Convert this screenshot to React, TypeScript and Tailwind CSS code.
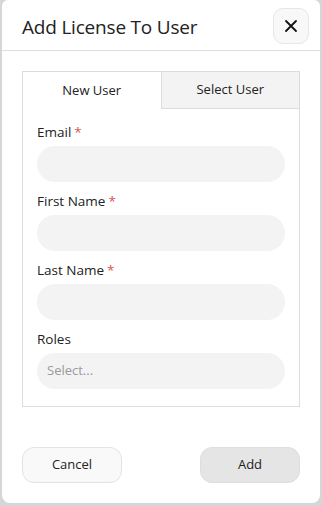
import { useState } from 'react';

type Field = { label: string; required: boolean; placeholder?: string };

const fields: Field[] = [
  { label: 'Email', required: true },
  { label: 'First Name', required: true },
  { label: 'Last Name', required: true },
  { label: 'Roles', required: false, placeholder: 'Select...' },
];

export default function App() {
  const [tab, setTab] = useState<'new' | 'select'>('new');

  return (
    <div
      className="w-[322px] h-[506px] bg-[#d6d6d6] px-[2px] pb-[3px]"
      style={{ fontFamily: '"Open Sans", "Noto Sans", sans-serif' }}
    >
      <div className="h-full bg-white rounded-b-lg rounded-t-md flex flex-col">
        {/* header */}
        <div className="h-[51px] border-b border-[#dedede] flex items-start justify-between pl-[20px] pr-[11px] pt-[8px] shrink-0">
          <h1 className="text-[19px] leading-[36px] text-[#222] tracking-[-0.2px] mt-[1px]">Add License To User</h1>
          <button className="w-[36px] h-[36px] rounded-[10px] border border-[#e6e6e6] bg-[#f8f8f8] flex items-center justify-center">
            <svg width="14" height="14" viewBox="0 0 14 14" fill="none" stroke="#111" strokeWidth="1.8" strokeLinecap="round">
              <path d="M2 2 L12 12 M12 2 L2 12" />
            </svg>
          </button>
        </div>

        {/* body */}
        <div className="px-[20px] pt-[20px]">
          <div className="border border-[#dcdcdc]">
            <div className="flex h-[37px]">
              <button
                onClick={() => setTab('new')}
                className={`flex-1 text-[13px] text-[#222] ${tab === 'new' ? 'bg-white' : 'bg-[#f3f3f3] border-b border-[#dcdcdc]'}`}
              >
                New User
              </button>
              <button
                onClick={() => setTab('select')}
                className={`flex-1 text-[13px] text-[#222] border-l border-[#dcdcdc] ${tab === 'select' ? 'bg-white' : 'bg-[#f3f3f3] border-b'}`}
              >
                Select User
              </button>
            </div>

            <div className="px-[14px] pt-[13px] pb-[8px]">
              {fields.map((f) => (
                <div key={f.label} className="mb-[9px]">
                  <div className="h-[20px] mb-[4px] text-[13.5px] leading-[20px] text-[#222]">
                    {f.label}
                    {f.required && <span className="text-[#d9534f] ml-[3px]">*</span>}
                  </div>
                  <div className="h-[36px] rounded-full bg-[#f3f3f3] flex items-center px-[10px] text-[13px] text-[#9a9a9a]">
                    {f.placeholder}
                  </div>
                </div>
              ))}
            </div>
          </div>
        </div>

        {/* footer */}
        <div className="flex justify-between px-[20px] mt-[40px]">
          <button className="w-[100px] h-[36px] rounded-[12px] border border-[#e3e3e3] bg-[#f9f9f9] text-[13px] text-[#222]">
            Cancel
          </button>
          <button className="w-[100px] h-[36px] rounded-[12px] border border-[#dedede] bg-[#e5e5e5] text-[13px] text-[#222]">
            Add
          </button>
        </div>
      </div>
    </div>
  );
}
